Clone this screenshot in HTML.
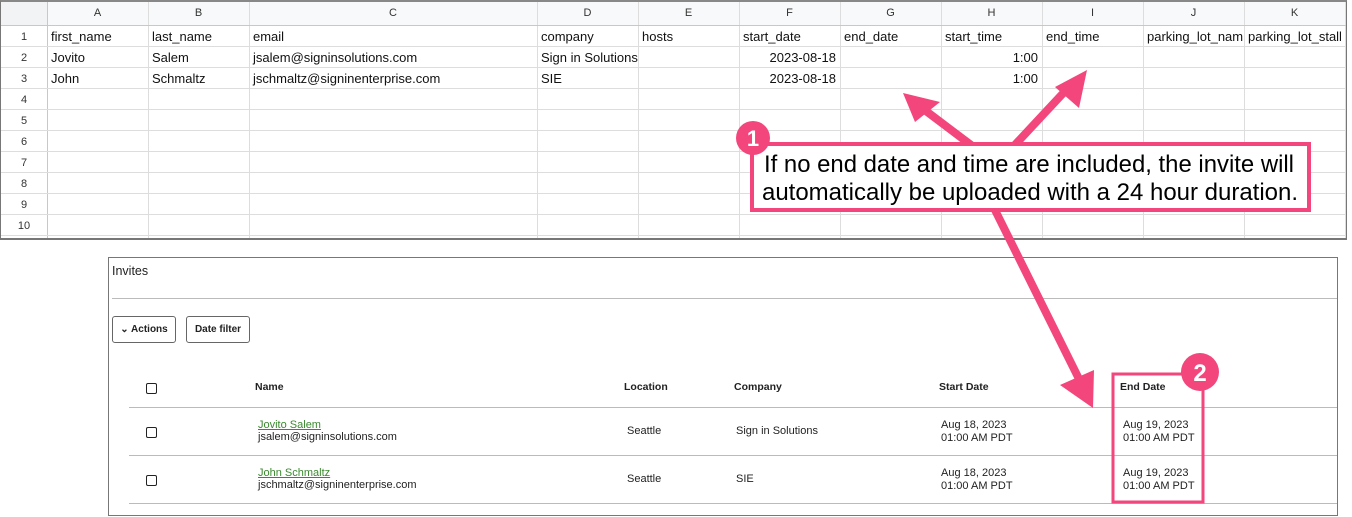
<!DOCTYPE html>
<html><head><style>
body{margin:0;width:1352px;height:517px;background:#fff;position:relative;overflow:hidden;font-family:"Liberation Sans",Arial,sans-serif}
.ss{position:absolute;left:0;top:0;width:1345px;height:236px;border:1px solid #777;border-top:2px solid #888;border-bottom:2px solid #777;overflow:hidden}
.c{position:absolute;font-size:13px;color:#111;white-space:nowrap}
.vl{position:absolute;top:0;width:1px;height:236px;background:#ddd}
.hl{position:absolute;left:0;height:1px;width:1345px;background:#ddd}
.hd{position:absolute;font-size:11px;color:#333;text-align:center}
.p{position:absolute;font-size:11px;color:#222;white-space:nowrap;line-height:13px}
.b{font-weight:bold;font-size:10.5px;color:#222}
.cb{position:absolute;width:9px;height:9px;border:1.5px solid #222;border-radius:2px}
.btn{position:absolute;top:316px;height:25px;border:1px solid #666;border-radius:3px;font-size:10px;font-weight:bold;line-height:25px;text-align:center;color:#222}
</style></head><body>
<div class="ss">
<div style="position:absolute;left:0;top:0;width:46px;height:23px;background:#f1f3f4"></div>
<div style="position:absolute;left:0;top:0;width:1345px;height:23px;background:#f8f9fa;z-index:-1"></div>
<div class="vl" style="left:46px;background:#c8c8c8"></div>
<div class="vl" style="left:147px"></div><div class="vl" style="left:248px"></div><div class="vl" style="left:536px"></div><div class="vl" style="left:637px"></div><div class="vl" style="left:738px"></div><div class="vl" style="left:839px"></div><div class="vl" style="left:940px"></div><div class="vl" style="left:1041px"></div><div class="vl" style="left:1142px"></div><div class="vl" style="left:1243px"></div><div class="vl" style="left:1344px"></div>
<div class="hl" style="top:23px;background:#c8c8c8"></div>
<div class="hl" style="top:44px"></div><div class="hl" style="top:65px"></div><div class="hl" style="top:86px"></div><div class="hl" style="top:107px"></div><div class="hl" style="top:128px"></div><div class="hl" style="top:149px"></div><div class="hl" style="top:170px"></div><div class="hl" style="top:191px"></div><div class="hl" style="top:212px"></div><div class="hl" style="top:233px"></div>
<div class="hd" style="left:46px;width:101px;top:5px">A</div><div class="hd" style="left:147px;width:101px;top:5px">B</div><div class="hd" style="left:248px;width:288px;top:5px">C</div><div class="hd" style="left:536px;width:101px;top:5px">D</div><div class="hd" style="left:637px;width:101px;top:5px">E</div><div class="hd" style="left:738px;width:101px;top:5px">F</div><div class="hd" style="left:839px;width:101px;top:5px">G</div><div class="hd" style="left:940px;width:101px;top:5px">H</div><div class="hd" style="left:1041px;width:101px;top:5px">I</div><div class="hd" style="left:1142px;width:101px;top:5px">J</div><div class="hd" style="left:1243px;width:101px;top:5px">K</div>
<div class="hd" style="left:10px;width:26px;top:29px">1</div><div class="hd" style="left:10px;width:26px;top:50px">2</div><div class="hd" style="left:10px;width:26px;top:71px">3</div><div class="hd" style="left:10px;width:26px;top:92px">4</div><div class="hd" style="left:10px;width:26px;top:113px">5</div><div class="hd" style="left:10px;width:26px;top:134px">6</div><div class="hd" style="left:10px;width:26px;top:155px">7</div><div class="hd" style="left:10px;width:26px;top:176px">8</div><div class="hd" style="left:10px;width:26px;top:197px">9</div><div class="hd" style="left:10px;width:26px;top:218px">10</div>
<div class="c" style="left:50px;top:27px">first_name</div><div class="c" style="left:151px;top:27px">last_name</div><div class="c" style="left:252px;top:27px">email</div><div class="c" style="left:540px;top:27px">company</div><div class="c" style="left:641px;top:27px">hosts</div><div class="c" style="left:742px;top:27px">start_date</div><div class="c" style="left:843px;top:27px">end_date</div><div class="c" style="left:944px;top:27px">start_time</div><div class="c" style="left:1045px;top:27px">end_time</div><div class="c" style="left:1146px;top:27px;width:96px;overflow:hidden">parking_lot_name</div><div class="c" style="left:1247px;top:27px">parking_lot_stall</div>
<div class="c" style="left:50px;top:48px">Jovito</div><div class="c" style="left:151px;top:48px">Salem</div><div class="c" style="left:252px;top:48px">jsalem@signinsolutions.com</div><div class="c" style="left:540px;top:48px">Sign in Solutions</div><div class="c" style="left:742px;top:48px;width:93px;text-align:right">2023-08-18</div><div class="c" style="left:944px;top:48px;width:93px;text-align:right">1:00</div>
<div class="c" style="left:50px;top:69px">John</div><div class="c" style="left:151px;top:69px">Schmaltz</div><div class="c" style="left:252px;top:69px">jschmaltz@signinenterprise.com</div><div class="c" style="left:540px;top:69px">SIE</div><div class="c" style="left:742px;top:69px;width:93px;text-align:right">2023-08-18</div><div class="c" style="left:944px;top:69px;width:93px;text-align:right">1:00</div>
</div>

<div style="position:absolute;left:108px;top:257px;width:1228px;height:257px;border:1px solid #777"></div>
<div class="p" style="left:112px;top:265px;font-size:12.5px">Invites</div>
<div style="position:absolute;left:112px;top:298px;width:1225px;height:1px;background:#bbb"></div>
<div class="btn" style="left:112px;width:62px">⌄ Actions</div>
<div class="btn" style="left:186px;width:62px">Date filter</div>
<div class="cb" style="left:146px;top:383px"></div>
<div class="p b" style="left:255px;top:381px">Name</div><div class="p b" style="left:624px;top:381px">Location</div><div class="p b" style="left:734px;top:381px">Company</div><div class="p b" style="left:939px;top:381px">Start Date</div><div class="p b" style="left:1120px;top:381px">End Date</div>
<div style="position:absolute;left:129px;top:407px;width:1208px;height:1px;background:#bbb"></div>
<div style="position:absolute;left:129px;top:455px;width:1208px;height:1px;background:#bbb"></div>
<div style="position:absolute;left:129px;top:503px;width:1208px;height:1px;background:#bbb"></div>
<div class="cb" style="left:146px;top:427px"></div><div class="cb" style="left:146px;top:475px"></div>
<div class="p" style="left:258px;top:419px;color:#3a8a2e;text-decoration:underline">Jovito Salem</div><div class="p" style="left:258px;top:431px">jsalem@signinsolutions.com</div>
<div class="p" style="left:258px;top:467px;color:#3a8a2e;text-decoration:underline">John Schmaltz</div><div class="p" style="left:258px;top:479px">jschmaltz@signinenterprise.com</div>
<div class="p" style="left:627px;top:425px">Seattle</div><div class="p" style="left:627px;top:473px">Seattle</div>
<div class="p" style="left:736px;top:425px">Sign in Solutions</div><div class="p" style="left:736px;top:473px">SIE</div>
<div class="p" style="left:941px;top:419px">Aug 18, 2023<br>01:00 AM PDT</div><div class="p" style="left:941px;top:467px">Aug 18, 2023<br>01:00 AM PDT</div>
<div class="p" style="left:1123px;top:419px">Aug 19, 2023<br>01:00 AM PDT</div><div class="p" style="left:1123px;top:467px">Aug 19, 2023<br>01:00 AM PDT</div>

<svg width="1352" height="517" style="position:absolute;left:0;top:0">
<g fill="#f2467c" stroke="#f2467c" stroke-width="8" stroke-linecap="round">
<line x1="975" y1="148" x2="922" y2="108"/>
<line x1="1012" y1="148" x2="1068" y2="88"/>
<line x1="995" y1="210" x2="1082" y2="385"/>
<polygon stroke="none" points="903,93 940,102 915,122"/>
<polygon stroke="none" points="1087,70 1079,108 1055,87"/>
<polygon stroke="none" points="1093,408 1060,385 1094,370"/>
</g>
<rect x="752" y="144" width="557" height="66" fill="#fff" stroke="#f2467c" stroke-width="4"/>
<rect x="1113" y="374" width="90" height="128" fill="none" stroke="#f2467c" stroke-width="3"/>
<circle cx="753" cy="138" r="17" fill="#f2467c"/>
<circle cx="1200" cy="372" r="19" fill="#f2467c"/>
<text x="753" y="146" font-family="Liberation Sans" font-size="22" font-weight="bold" fill="#fff" text-anchor="middle">1</text>
<text x="1200" y="381" font-family="Liberation Sans" font-size="24" font-weight="bold" fill="#fff" text-anchor="middle">2</text>
<text x="764" y="172" font-family="Liberation Sans" font-size="24" fill="#000" textLength="530" lengthAdjust="spacingAndGlyphs">If no end date and time are included, the invite will</text>
<text x="762" y="200" font-family="Liberation Sans" font-size="24" fill="#000" textLength="536" lengthAdjust="spacingAndGlyphs">automatically be uploaded with a 24 hour duration.</text>
</svg>
</body></html>
